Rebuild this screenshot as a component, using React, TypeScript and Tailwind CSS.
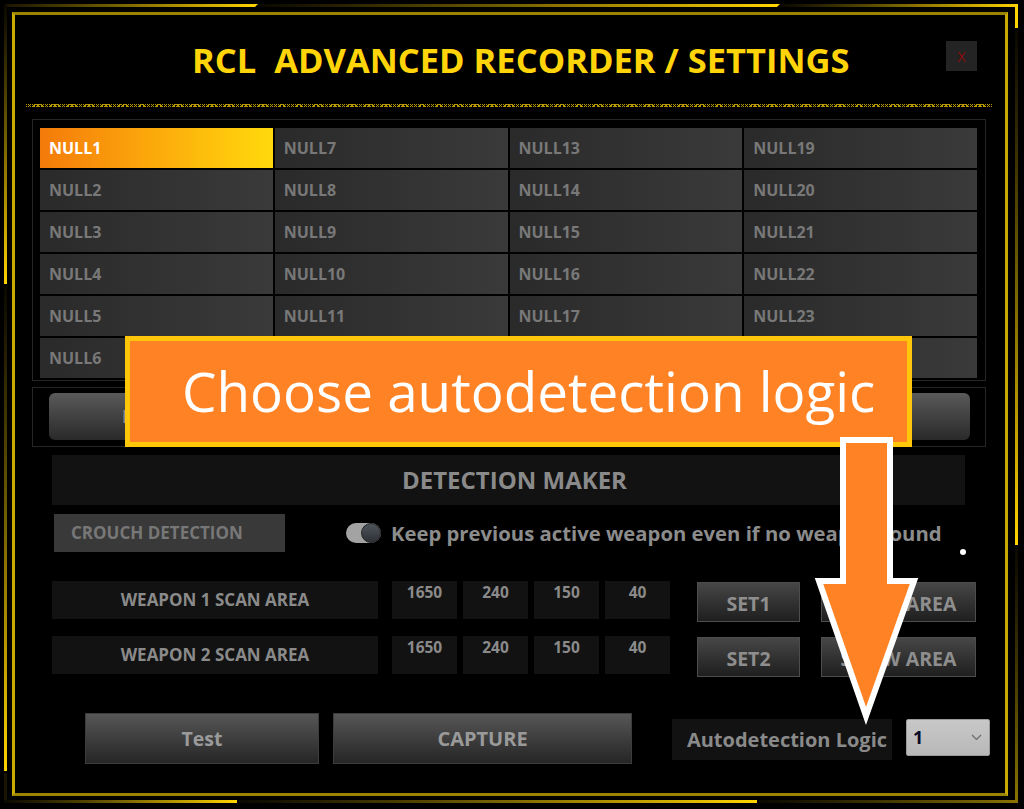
import React from 'react';

// Slot names fill the grid column by column (NULL1..NULL6 in the first column, etc.)
const slots = Array.from({ length: 24 }, (_, i) => `NULL${i + 1}`);

const scanRows = [
  { label: 'WEAPON 1 SCAN AREA', set: 'SET1', values: ['1650', '240', '150', '40'] },
  { label: 'WEAPON 2 SCAN AREA', set: 'SET2', values: ['1650', '240', '150', '40'] },
];

function FrameLines() {
  return (
    <>
      {/* outer gold trim, split into fading segments */}
      <div className="absolute left-[4px] top-[4px] h-[3px] w-[254px] bg-linear-to-r from-[#1a1500] to-[#ffd400] [clip-path:polygon(0_0,100%_0,calc(100%-3px)_100%,0_100%)]" />
      <div className="absolute left-[258px] top-[4px] h-[3px] w-[522px] bg-linear-to-r from-[#0a0800] to-[#ffd400] [clip-path:polygon(0_0,100%_0,calc(100%-3px)_100%,0_100%)]" />
      <div className="absolute left-[780px] top-[4px] h-[3px] w-[238px] bg-linear-to-r from-[#0a0800] to-[#ffd400]" />
      <div className="absolute left-[1015px] top-[4px] h-[24px] w-[3px] bg-[#ffd400]" />
      <div className="absolute left-[1015px] top-[30px] h-[515px] w-[3px] bg-linear-to-b from-[#0a0800] to-[#ffd400]" />
      <div className="absolute left-[1015px] top-[547px] h-[256px] w-[3px] bg-linear-to-b from-[#0a0800] to-[#8a7400]" />
      <div className="absolute left-[4px] top-[4px] h-[280px] w-[3px] bg-linear-to-b from-[#0a0800] to-[#ffd400]" />
      <div className="absolute left-[4px] top-[286px] h-[485px] w-[3px] bg-linear-to-b from-[#0a0800] to-[#ffd400]" />
      <div className="absolute left-[4px] top-[773px] h-[30px] w-[3px] bg-[#1a1500]" />
      <div className="absolute left-[4px] top-[800px] h-[3px] w-[233px] bg-linear-to-r from-[#0a0800] to-[#ffd400]" />
      <div className="absolute left-[239px] top-[800px] h-[3px] w-[518px] bg-linear-to-r from-[#0a0800] to-[#ffd400]" />
      <div className="absolute left-[759px] top-[800px] h-[3px] w-[259px] bg-linear-to-r from-[#0a0800] to-[#8a7400]" />
    </>
  );
}

function GreyButton({ label, className }: { label: string; className: string }) {
  return (
    <button
      className={`flex items-center justify-center border border-[#3c3c3c] bg-linear-to-b from-[#575757] to-[#262626] font-bold text-[#9a9a9a] ${className}`}
    >
      {label}
    </button>
  );
}

function DarkField({ children, className }: { children: React.ReactNode; className: string }) {
  return <div className={`bg-[#121212] font-bold text-[#8a8a8a] ${className}`}>{children}</div>;
}

export default function App() {
  return (
    <div className="relative h-[809px] w-[1024px] overflow-hidden bg-black font-['Open_Sans','Liberation_Sans',sans-serif]">
      <FrameLines />

      <div className="ml-[12px] mt-[12px] h-[784px] w-[996px] border-[3px] border-[#9a8300] border-l-[#c9aa00] border-r-[#c9aa00]">
        {/* title bar */}
        <div className="flex items-start pt-[25px]">
          <h1 className="ml-[177px] whitespace-pre text-[34.5px] font-bold leading-[40px] text-[#ffd50a]">
            RCL  ADVANCED RECORDER / SETTINGS
          </h1>
          <button className="ml-auto mr-[28px] mt-[1px] flex h-[30px] w-[31px] items-center justify-center bg-[#242424] text-[14px] text-[#8b0a0a]">
            X
          </button>
        </div>

        <div className="ml-[11px] mr-[13px] mt-[24px] h-[3px] bg-[repeating-linear-gradient(45deg,#b89a00_0_1px,transparent_1px_3px),repeating-linear-gradient(-45deg,#b89a00_0_1px,transparent_1px_3px)]" />

        {/* recorder slots */}
        <div className="ml-[17px] mr-[19px] mt-[12px] border border-[#262626] pb-[2px] pl-[7px] pr-[8px] pt-[8px]">
          <div className="grid grid-flow-col grid-cols-4 grid-rows-6 gap-[2px]">
            {slots.map((name, i) => (
              <div
                key={name}
                className={
                  i === 0
                    ? 'flex h-[40px] items-center bg-linear-to-r from-[#f47a0a] to-[#ffd90c] pl-[9px] text-[16px] font-bold text-white'
                    : 'flex h-[40px] items-center bg-linear-to-r from-[#2a2a2a] to-[#3a3a3a] pl-[9px] text-[16px] font-bold text-[#787878]'
                }
              >
                {name}
              </div>
            ))}
          </div>
        </div>

        <div className="ml-[17px] mr-[19px] mt-[6px] flex h-[60px] gap-[20px] border border-[#262626] pl-[16px] pr-[15px] pt-[5px]">
          <button className="flex h-[47px] w-[200px] items-center justify-start rounded-md bg-linear-to-b from-[#5a5a5a] to-[#2a2a2a] pl-[73px] text-[17px] font-bold text-[#8a8a8a]">
            LOAD
          </button>
          <button className="ml-auto flex h-[47px] w-[300px] items-center justify-center rounded-md bg-linear-to-b from-[#5a5a5a] to-[#2a2a2a] text-[17px] font-bold text-[#8a8a8a]">
            SAVE
          </button>
        </div>

        <DarkField className="ml-[37px] mr-[40px] mt-[8px] flex h-[50px] items-center justify-center pl-[12px] text-[24px]">
          DETECTION MAKER
        </DarkField>

        <div className="mt-[9px] flex h-[38px] items-center">
          <div className="ml-[39px] flex h-[38px] w-[231px] items-center bg-[#393939] pl-[17px] text-[17px] font-bold text-[#777777]">
            CROUCH DETECTION
          </div>
          <div className="ml-[61px] flex h-[20px] w-[35px] items-center justify-end rounded-full bg-[#a3a3a3]">
            <div className="h-[20px] w-[20px] rounded-full border border-[#222] bg-linear-to-b from-[#50555c] to-[#2e3237]" />
          </div>
          <span className="ml-[10px] text-[20.3px] font-bold text-[#8c8c8c]">
            Keep previous active weapon even if no weapon found
          </span>
        </div>

        {scanRows.map((row, r) => (
          <div key={row.set} className={`flex items-start ${r === 0 ? 'mt-[29px]' : 'mt-[14px]'}`}>
            <DarkField className="ml-[37px] flex h-[38px] w-[326px] items-center justify-center text-[17px]">
              {row.label}
            </DarkField>
            <div className="ml-[14px] flex gap-[6px]">
              {row.values.map((v, k) => (
                <DarkField key={k} className="h-[38px] w-[65px] pt-[1px] text-center text-[15.5px] leading-[20px]">
                  {v}
                </DarkField>
              ))}
            </div>
            <button className="ml-[27px] mt-[1px] flex h-[40px] w-[103px] items-center justify-center border border-[#4d4d4d] bg-linear-to-b from-[#474747] to-[#1f1f1f] pt-[3px] text-[19.5px] font-bold text-[#8e8e8e]">
              {row.set}
            </button>
            <button className="ml-[21px] mt-[1px] flex h-[40px] w-[155px] items-center justify-center border border-[#4d4d4d] bg-linear-to-b from-[#474747] to-[#1f1f1f] pt-[3px] text-[19.5px] font-bold text-[#8e8e8e]">
              SHOW AREA
            </button>
          </div>
        ))}

        <div className="mt-[36px] flex items-start">
          <GreyButton label="Test" className="ml-[70px] h-[51px] w-[234px] text-[19.5px]" />
          <GreyButton label="CAPTURE" className="ml-[14px] h-[51px] w-[299px] text-[20px]" />
          <DarkField className="ml-[40px] mt-[6px] flex h-[41px] w-[220px] items-center justify-center pl-[10px] text-[20px]">
            Autodetection Logic
          </DarkField>
          <div className="ml-[14px] mt-[6px] flex h-[37px] w-[84px] items-center rounded-[2px] border border-[#9a9a9a] bg-linear-to-b from-[#c8c8c8] to-[#b8b8b8] pl-[6px] pr-[7px]">
            <span className="text-[18px] font-bold text-[#0a0a28]">1</span>
            <svg className="ml-auto" width="11" height="7" viewBox="0 0 11 7">
              <path d="M1 1l4.5 4.5L10 1" fill="none" stroke="#6a6a6a" strokeWidth="1.2" />
            </svg>
          </div>
        </div>
      </div>

      {/* callout over the dialog */}
      <div className="absolute left-[125px] top-[336px] flex h-[111px] w-[787px] items-center border-[5px] border-[#ffc60a] bg-[#ff8225] pl-[52px]">
        <span className="text-[54.8px] leading-none text-white">Choose autodetection logic</span>
      </div>

      <svg className="absolute left-0 top-0" width="1024" height="809" viewBox="0 0 1024 809">
        <polygon
          points="843,440 890,440 890,581 914,581 866,716 819,581 843,581"
          fill="#ff8225"
          stroke="#ffffff"
          strokeWidth="6"
          strokeLinejoin="miter"
        />
      </svg>

      <div className="absolute left-[960px] top-[549px] h-[6px] w-[6px] rounded-full bg-white" />
    </div>
  );
}
